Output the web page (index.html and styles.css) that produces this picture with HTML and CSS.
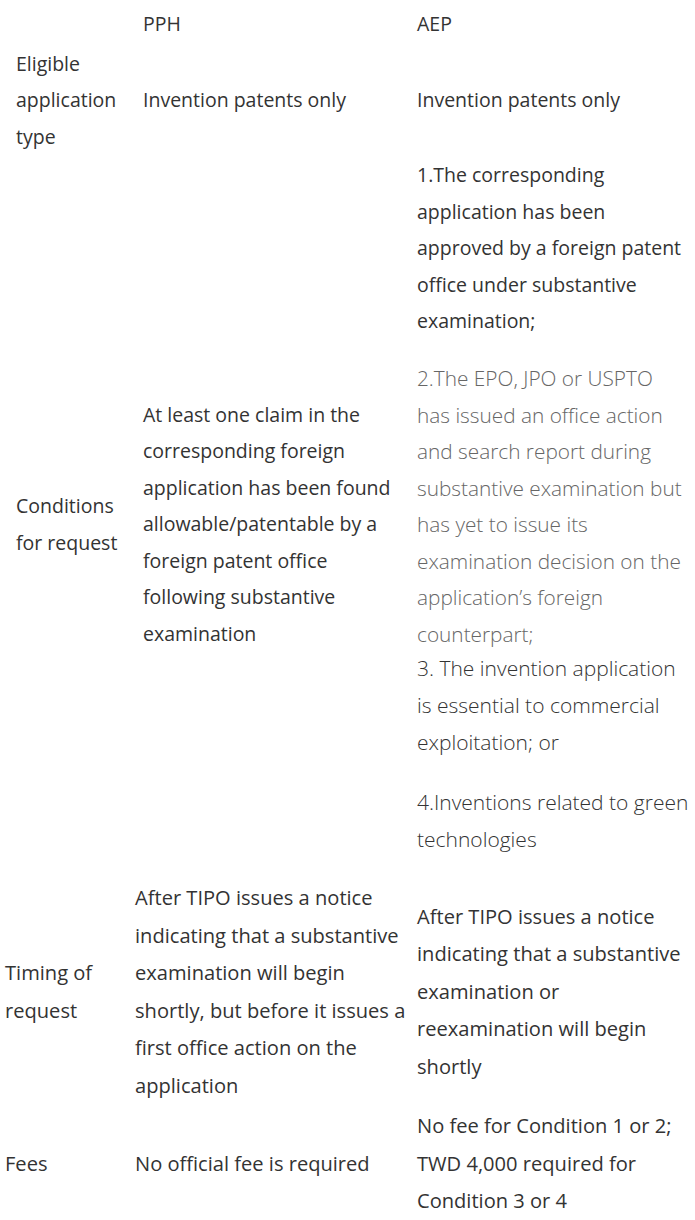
FILE: index.html
```html
<!DOCTYPE html>
<html lang="en">
<head>
<meta charset="utf-8">
<title>PPH vs AEP</title>
<link rel="stylesheet" href="styles.css">
</head>
<body>
<table class="cmp">
  <colgroup><col class="w1"><col class="w2"><col class="w3"></colgroup>
  <tr class="head">
    <td class="ind1"></td>
    <td class="ind2">PPH</td>
    <td class="c3">AEP</td>
  </tr>
  <tr class="top">
    <td class="ind1">Eligible application type</td>
    <td class="ind2">Invention patents only</td>
    <td class="c3">Invention patents only</td>
  </tr>
  <tr class="top cond">
    <td class="ind1 cond-label">Conditions for request</td>
    <td class="ind2 cond-pph">At least one claim in the corresponding foreign application has been found allowable/patentable by a foreign patent office following substantive examination</td>
    <td class="c3 cond-aep">
      <p class="p1">1.The corresponding application has been approved by a foreign patent office under substantive examination;</p>
      <p class="p2">2.The EPO, JPO or USPTO has issued an office action and search report during substantive examination but has yet to issue its examination decision on the application’s foreign counterpart;</p>
      <p class="p3">3. The invention application is essential to commercial exploitation; or</p>
      <p class="p4">4.Inventions related to green technologies</p>
    </td>
  </tr>
  <tr class="bottom timing">
    <td>Timing of request</td>
    <td>After TIPO issues a notice indicating that a substantive examination will begin shortly, but before it issues a first office action on the application</td>
    <td class="c3">After TIPO issues a notice indicating that a substantive examination or reexamination will begin shortly</td>
  </tr>
  <tr class="bottom fees">
    <td>Fees</td>
    <td>No official fee is required</td>
    <td class="c3">No fee for Condition 1 or 2; TWD 4,000 required for Condition 3 or 4</td>
  </tr>
</table>
</body>
</html>
```

FILE: styles.css
```css
html, body {
  margin: 0;
  padding: 0;
  background: #fff;
}
body {
  font-family: "Open Sans", "Liberation Sans", sans-serif;
  font-size: 19.5px;
  color: #333;
}
.cmp {
  width: 695px;
  border-collapse: collapse;
  table-layout: fixed;
}
.w1 { width: 130px; }
.w2 { width: 282px; }
.w3 { width: 283px; }
.cmp td {
  padding: 0 5px;
  vertical-align: middle;
  line-height: 36.5px;
}
.cmp td.c3 { padding-right: 0; }
.cmp td.ind1 { padding-left: 16px; }
.cmp td.ind2 { padding-left: 13px; }
.head td { padding-top: 6px; padding-bottom: 3px; }
.cmp td.cond-label { padding-top: 17px; }
.cmp td.cond-pph { padding-top: 17px; }
.cmp td.cond-aep { padding-top: 2px; padding-bottom: 19px; }
.cond-aep p { margin: 0; }
.cond-aep .p1 { margin-bottom: 20.5px; }
.cond-aep .p2 { color: #666; font-weight: 300; font-size: 20.8px; padding-right: 6px; }
.cond-aep .p3 { font-weight: 300; font-size: 21px; line-height: 37px; margin-top: -2px; }
.cond-aep .p4 { font-weight: 300; font-size: 21px; margin-top: 23px; line-height: 37px; }
.bottom td { line-height: 37.5px; font-size: 20.1px; }
.timing td { padding-top: 2px; padding-bottom: 2px; }
.fees td { padding-top: 1px; }
```
